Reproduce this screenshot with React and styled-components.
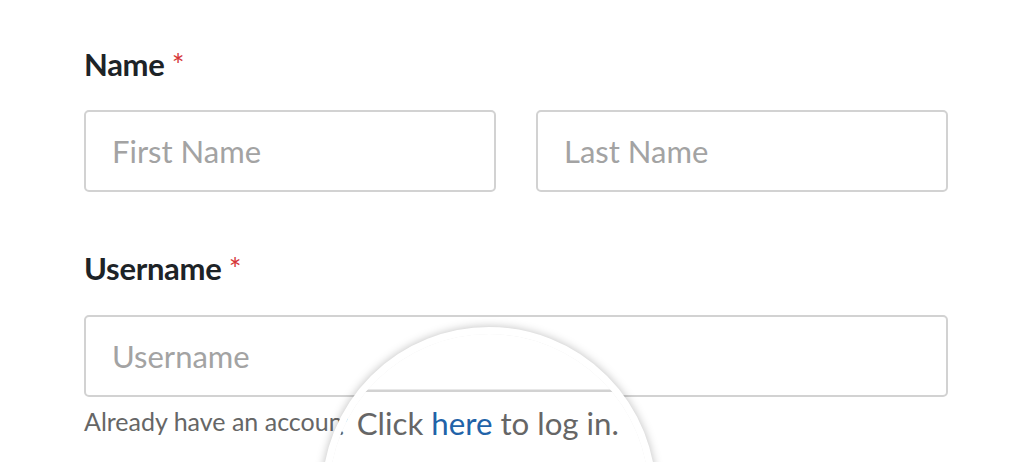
import styled, { createGlobalStyle } from "styled-components";

const GlobalStyle = createGlobalStyle`
  html, body {
    margin: 0;
    padding: 0;
    background: #fff;
    font-family: Lato, "Open Sans", sans-serif;
  }
`;

const LENS = { left: 322, top: 327, size: 334, ring: 7 };
const ZOOM = { k: 1.25, cx: 418, cy: 417 };

function FormFields() {
  return (
    <Form>
      <Field>
        <Label>
          Name <Required>*</Required>
        </Label>
        <Row>
          <TextInput placeholder="First Name" />
          <TextInput placeholder="Last Name" />
        </Row>
      </Field>
      <Field>
        <Label>
          Username <Required>*</Required>
        </Label>
        <TextInput placeholder="Username" />
        <Helper>
          Already have an account? Click <Link href="#">here</Link> to log in.
        </Helper>
      </Field>
    </Form>
  );
}

export default function App() {
  const inner = LENS.ring;
  return (
    <Page>
      <GlobalStyle />
      <FormFields />
      <Lens
        style={{ left: LENS.left, top: LENS.top, width: LENS.size, height: LENS.size }}
        aria-hidden="true"
      >
        <Magnified
          style={{
            left: -(LENS.left + inner),
            top: -(LENS.top + inner),
            transformOrigin: `${ZOOM.cx}px ${ZOOM.cy}px`,
            transform: `scale(${ZOOM.k})`,
          }}
        >
          <FormFields />
        </Magnified>
      </Lens>
    </Page>
  );
}

const Page = styled.div`
  position: relative;
  width: 1024px;
  height: 462px;
  overflow: hidden;
  background: #fff;
`;

const Form = styled.div`
  display: flex;
  flex-direction: column;
  gap: 58px;
  width: 864px;
  padding: 46px 0 0 84px;
`;

const Field = styled.div`
  display: flex;
  flex-direction: column;
  gap: 28px;
  &:last-child {
    gap: 29px;
  }
`;

const Label = styled.div`
  font-size: 31px;
  line-height: 36px;
  font-weight: 700;
  letter-spacing: -0.3px;
  color: #1d2327;
`;

const Required = styled.span`
  color: #d63638;
  font-weight: 400;
  font-size: 30px;
  letter-spacing: 0;
`;

const Row = styled.div`
  display: flex;
  gap: 40px;
  & > * {
    flex: 1;
  }
`;

const TextInput = styled.input`
  display: block;
  min-width: 0;
  box-sizing: border-box;
  height: 82px;
  border: 2px solid #d2d2d2;
  border-radius: 5px;
  padding: 0 0 0 26px;
  font-family: Lato, sans-serif;
  font-size: 31px;
  color: #333;
  background: #fff;
  outline: none;
  &::placeholder {
    color: #a3a3a3;
  }
`;

const Helper = styled.div`
  margin-top: -20px;
  font-size: 25px;
  line-height: 30px;
  color: #666;
`;

const Link = styled.a`
  color: #2162a8;
  text-decoration: none;
`;

const Lens = styled.div`
  position: absolute;
  box-sizing: border-box;
  border-radius: 50%;
  border: 7px solid #fff;
  overflow: hidden;
  background: #fff;
  box-shadow: 0 0 10px rgba(0, 0, 0, 0.26), inset 0 0 6px rgba(0, 0, 0, 0.22);
`;

const Magnified = styled.div`
  position: absolute;
  width: 1024px;
  height: 462px;
  background: #fff;
`;
